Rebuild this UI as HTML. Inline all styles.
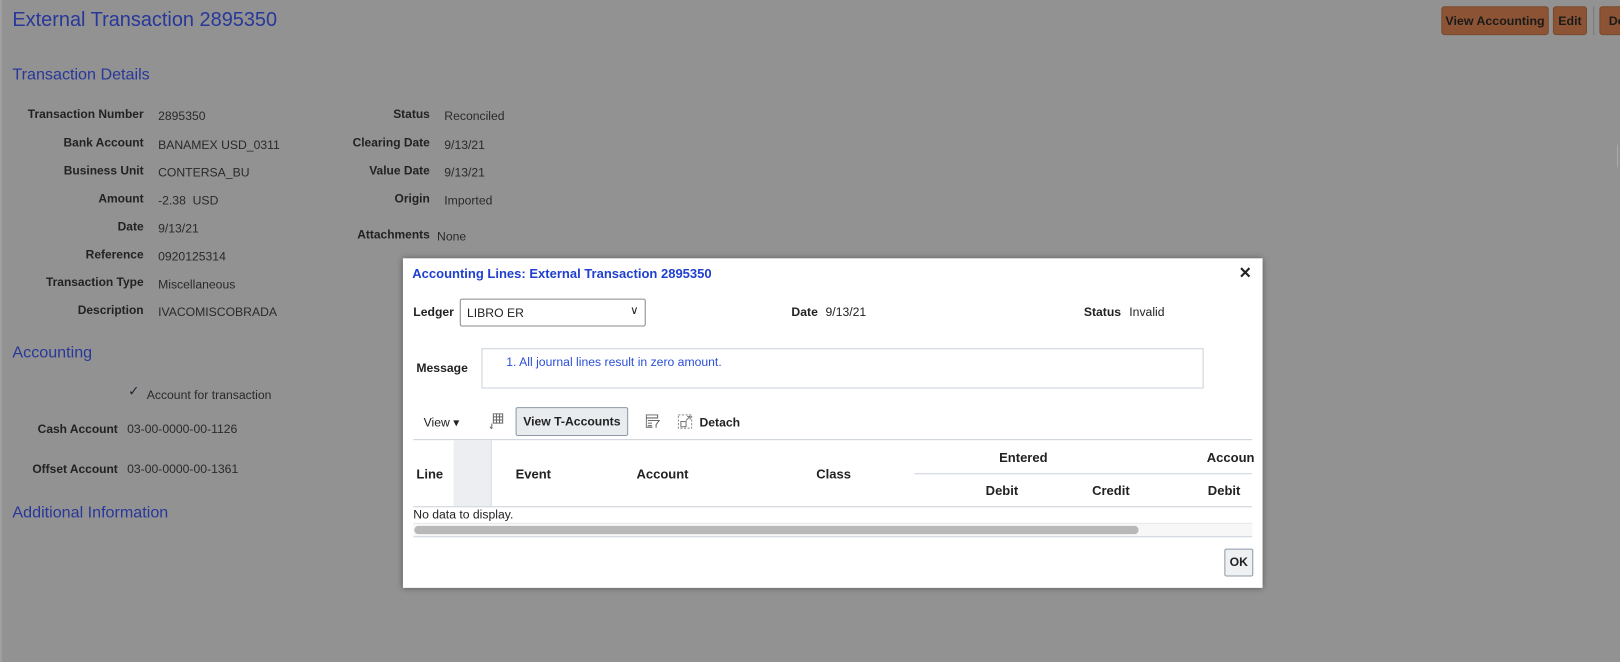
<!DOCTYPE html>
<html><head><meta charset="utf-8"><style>
*{margin:0;padding:0;box-sizing:border-box}
html,body{width:1620px;height:662px;overflow:hidden}
body{background:#929292;font-family:"Liberation Sans",Arial,sans-serif;position:relative;color:#222}
#w{position:absolute;left:0;top:0;width:1568px;height:641px;transform:scale(1.0332);transform-origin:0 0}
.a{position:absolute;white-space:nowrap}
.h{color:#28379a}
.l{font-weight:bold;font-size:11.6px;color:#222;text-align:right}
.v{font-size:11.8px;color:#2a2a2a}
.btn{position:absolute;top:6px;height:28px;background:#8c5434;border:1px solid #7a4a2e;border-radius:3px;font-weight:bold;font-size:12px;color:#1a1a1a;line-height:26px;text-align:center}
.dlg{position:absolute;left:390px;top:250px;width:832px;height:319px;background:#fff;box-shadow:0 0 6px rgba(0,0,0,.4)}
.d{position:absolute;white-space:nowrap;font-size:11.8px;color:#222}
.b{font-weight:bold}
</style></head><body>
<div id="w">
<div class="a" style="left:0;top:0;width:2px;height:662px;background:#a0a0a0"></div>
<div class="a h" style="left:12px;top:9px;font-size:19.3px">External Transaction 2895350</div>
<div class="btn" style="left:1395px;width:104px">View Accounting</div>
<div class="btn" style="left:1503px;width:33px">Edit</div>
<div class="a" style="left:1542px;top:6px;width:1px;height:28px;background:#7a7a7a"></div>
<div class="btn" style="left:1548px;width:80px;text-align:left;padding-left:8px">Done</div>
<div class="a" style="left:1565px;top:140px;width:5px;height:22px;border-left:1px solid #aaa"></div>
<div class="a h" style="left:12px;top:64px;font-size:15.6px">Transaction Details</div>

<div class="a l" style="right:1429px;top:104px">Transaction Number</div><div class="a v" style="left:153px;top:105px">2895350</div>
<div class="a l" style="right:1429px;top:132px">Bank Account</div><div class="a v" style="left:153px;top:133px">BANAMEX USD_0311</div>
<div class="a l" style="right:1429px;top:159px">Business Unit</div><div class="a v" style="left:153px;top:160px">CONTERSA_BU</div>
<div class="a l" style="right:1429px;top:186px">Amount</div><div class="a v" style="left:153px;top:187px">-2.38&nbsp; USD</div>
<div class="a l" style="right:1429px;top:213px">Date</div><div class="a v" style="left:153px;top:214px">9/13/21</div>
<div class="a l" style="right:1429px;top:240px">Reference</div><div class="a v" style="left:153px;top:241px">0920125314</div>
<div class="a l" style="right:1429px;top:267px">Transaction Type</div><div class="a v" style="left:153px;top:268px">Miscellaneous</div>
<div class="a l" style="right:1429px;top:294px">Description</div><div class="a v" style="left:153px;top:295px">IVACOMISCOBRADA</div>

<div class="a l" style="right:1152px;top:104px">Status</div><div class="a v" style="left:430px;top:105px">Reconciled</div>
<div class="a l" style="right:1152px;top:132px">Clearing Date</div><div class="a v" style="left:430px;top:133px">9/13/21</div>
<div class="a l" style="right:1152px;top:159px">Value Date</div><div class="a v" style="left:430px;top:160px">9/13/21</div>
<div class="a l" style="right:1152px;top:186px">Origin</div><div class="a v" style="left:430px;top:187px">Imported</div>
<div class="a l" style="right:1152px;top:221px">Attachments</div><div class="a v" style="left:423px;top:222px">None</div>

<div class="a h" style="left:12px;top:333px;font-size:15.6px">Accounting</div>
<div class="a" style="left:124px;top:371px;font-size:13px;color:#223">✓</div>
<div class="a v" style="left:142px;top:375px">Account for transaction</div>
<div class="a l" style="right:1454px;top:409px">Cash Account</div><div class="a v" style="left:123px;top:408px">03-00-0000-00-1126</div>
<div class="a l" style="right:1454px;top:448px">Offset Account</div><div class="a v" style="left:123px;top:447px">03-00-0000-00-1361</div>
<div class="a h" style="left:12px;top:488px;font-size:15.6px">Additional Information</div>

<div class="dlg">
 <div class="d b" style="left:9px;top:8px;font-size:12.6px;color:#1f3fd0">Accounting Lines: External Transaction 2895350</div>
 <div class="d b" style="left:809px;top:5px;font-size:15px">✕</div>
 <div class="d b" style="left:10px;top:45px">Ledger</div>
 <div class="d" style="left:55px;top:39px;width:180px;height:27px;border:1px solid #8a8a8a;border-radius:2px;padding:6px 0 0 6px">LIBRO ER<span style="position:absolute;right:6px;top:4px;font-size:11px">&#x2228;</span></div>
 <div class="d b" style="left:376px;top:45px">Date</div><div class="d" style="left:409px;top:45px">9/13/21</div>
 <div class="d b" style="left:659px;top:45px">Status</div><div class="d" style="left:703px;top:45px">Invalid</div>
 <div class="d b" style="left:13px;top:99px">Message</div>
 <div style="position:absolute;left:76px;top:87px;width:699px;height:39px;border:1px solid #ccd3da"></div>
 <div class="d" style="left:100px;top:93px;color:#2a4fd8">1. All journal lines result in zero amount.</div>
 <div class="d" style="left:20px;top:152px">View ▾</div>
 <svg style="position:absolute;left:84px;top:150px" width="14" height="16" viewBox="0 0 14 16"><rect x="3.5" y="0.5" width="9" height="9" fill="none" stroke="#666"/><path d="M3.5 3.5h9M3.5 6.5h9M6.5 .5v9M9.5 .5v9M2 10v5M0 13l2 2" stroke="#666" fill="none"/></svg>
 <div class="d b" style="left:109px;top:144px;width:109px;height:28px;background:#e9ecef;border:1px solid #8d99a6;border-radius:2px;text-align:center;line-height:26px">View T-Accounts</div>
 <svg style="position:absolute;left:235px;top:151px" width="14" height="14" viewBox="0 0 14 14"><path d="M.5.5h11v3h-11zM.5 3.5v9h6M2 6h5M2 8.5h4M2 11h4M7 6h6l-3 4v3" stroke="#666" fill="none"/></svg>
 <svg style="position:absolute;left:266px;top:151px" width="14" height="14" viewBox="0 0 14 14"><rect x=".5" y=".5" width="13" height="13" fill="none" stroke="#777" stroke-dasharray="2 1.5"/><rect x="3" y="7" width="5" height="5" fill="none" stroke="#777"/><path d="M8 6l4-4M9 2h3v3" stroke="#777" fill="none"/></svg>
 <div class="d b" style="left:287px;top:152px">Detach</div>
 <div style="position:absolute;left:10px;top:175px;width:812px;height:1px;background:#ccd3da"></div>
 <div style="position:absolute;left:49px;top:176px;width:37px;height:64px;background:#eceef1;border-right:1px solid #dde"></div>
 <div class="d b" style="left:13px;top:202px;font-size:12.6px">Line</div>
 <div class="d b" style="left:109px;top:202px;font-size:12.6px">Event</div>
 <div class="d b" style="left:226px;top:202px;font-size:12.6px">Account</div>
 <div class="d b" style="left:400px;top:202px;font-size:12.6px">Class</div>
 <div class="d b" style="left:577px;top:186px;font-size:12.6px">Entered</div>
 <div class="d b" style="left:778px;top:186px;font-size:12.6px">Accoun</div>
 <div style="position:absolute;left:495px;top:208px;width:327px;height:1px;background:#ccd3da"></div>
 <div class="d b" style="left:564px;top:218px;font-size:12.6px">Debit</div>
 <div class="d b" style="left:667px;top:218px;font-size:12.6px">Credit</div>
 <div class="d b" style="left:779px;top:218px;font-size:12.6px">Debit</div>
 <div style="position:absolute;left:10px;top:240px;width:812px;height:1px;background:#ccd3da"></div>
 <div class="d" style="left:10px;top:241px">No data to display.</div>
 <div style="position:absolute;left:10px;top:256px;width:812px;height:1px;background:#e3e6ea"></div>
 <div style="position:absolute;left:10px;top:257px;width:812px;height:12px;background:#f7f7f7"></div>
 <div style="position:absolute;left:11px;top:259px;width:701px;height:8px;background:#b8b8b8;border-radius:4px"></div>
 <div style="position:absolute;left:10px;top:269px;width:812px;height:1px;background:#ccd3da"></div>
 <div class="d b" style="left:795px;top:281px;width:28px;height:27px;background:#eef0f2;border:1px solid #8d99a6;border-radius:2px;text-align:center;line-height:25px">OK</div>
</div>
</div>
</body></html>
